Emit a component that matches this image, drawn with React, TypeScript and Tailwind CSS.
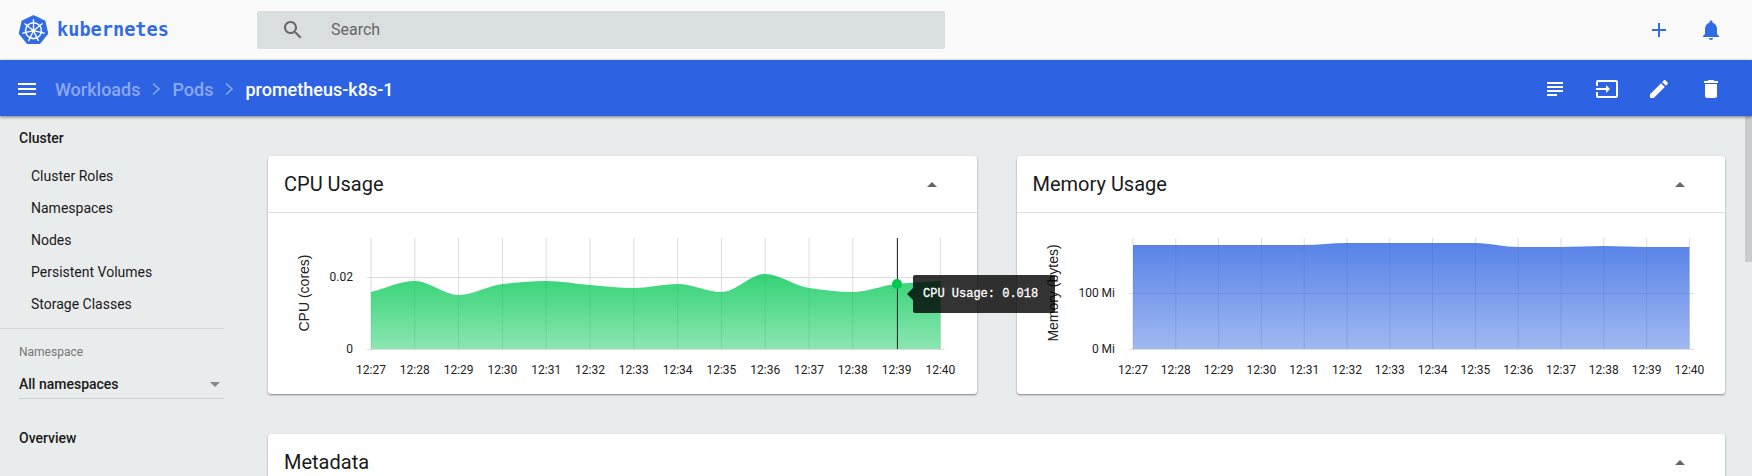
import type { ReactNode } from "react"

const ROBOTO = "font-['Roboto',sans-serif]"
const MINUTES = ["12:27", "12:28", "12:29", "12:30", "12:31", "12:32", "12:33", "12:34", "12:35", "12:36", "12:37", "12:38", "12:39", "12:40"]

// y values are px from the top of the card body
const CPU_POINTS = [79, 68, 82, 71, 68, 72, 75, 71, 79, 61, 75, 79, 71, 68]
const MEM_POINTS = [32, 32, 32, 32, 32, 30, 30, 30, 30, 34, 34, 33, 34, 34]

const CLUSTER_ITEMS = ["Cluster Roles", "Namespaces", "Nodes", "Persistent Volumes", "Storage Classes"]

function smoothPath(xs: number[], ys: number[]) {
  const n = xs.length
  const slopes = xs.slice(1).map((x, i) => (ys[i + 1] - ys[i]) / (x - xs[i]))
  const tangents = xs.map((_, i) => {
    if (i === 0) return slopes[0]
    if (i === n - 1) return slopes[n - 2]
    const a = slopes[i - 1]
    const b = slopes[i]
    return a * b <= 0 ? 0 : (2 * a * b) / (a + b)
  })
  let d = `M${xs[0]} ${ys[0]}`
  for (let i = 0; i < n - 1; i++) {
    const h = (xs[i + 1] - xs[i]) / 3
    d += `C${xs[i] + h} ${ys[i] + tangents[i] * h} ${xs[i + 1] - h} ${ys[i + 1] - tangents[i + 1] * h} ${xs[i + 1]} ${ys[i + 1]}`
  }
  return d
}

function Icon({ d, className }: { d: string; className: string }) {
  return (
    <svg viewBox="0 0 24 24" className={className} fill="currentColor">
      <path d={d} />
    </svg>
  )
}

function Chevron() {
  return (
    <svg viewBox="0 0 10 14" className="w-[10px] h-[14px] mx-[11px] text-[#8aa8f0]" fill="none" stroke="currentColor" strokeWidth="1.6">
      <path d="M2 1.5 8 7 2 12.5" />
    </svg>
  )
}

function KubeLogo() {
  const spokes = [0, 1, 2, 3, 4, 5, 6]
  return (
    <svg viewBox="0 0 32 32" className="w-[31px] h-[31px]">
      <path
        d="M16 1.2 27.4 6.7 30.2 19 22.3 28.9H9.7L1.8 19 4.6 6.7Z"
        fill="#326ce5"
        stroke="#326ce5"
        strokeWidth="2"
        strokeLinejoin="round"
      />
      <circle cx="16" cy="16.2" r="8.2" fill="none" stroke="#fff" strokeWidth="1.6" />
      <circle cx="16" cy="16.2" r="1.8" fill="#fff" />
      {spokes.map((i) => (
        <g key={i} transform={`rotate(${(i * 360) / 7} 16 16.2)`}>
          <line x1="16" y1="16.2" x2="16" y2="4.8" stroke="#fff" strokeWidth="1.4" strokeLinecap="round" />
        </g>
      ))}
    </svg>
  )
}

function Chart({
  id,
  color,
  startX,
  step,
  points,
  ticks,
  tickX,
  axisTitle,
  axisX,
  children,
}: {
  id: string
  color: string
  startX: number
  step: number
  points: number[]
  ticks: { y: number; label: string }[]
  tickX: number
  axisTitle: string
  axisX: number
  children?: ReactNode
}) {
  const xs = points.map((_, i) => startX + i * step)
  const top = 25
  const bottom = 136
  const line = smoothPath(xs, points)
  const area = `${line}L${xs[xs.length - 1]} ${bottom}L${xs[0]} ${bottom}Z`
  return (
    <svg width="100%" height="181" className="block overflow-visible">
      <defs>
        <linearGradient id={id} x1="0" y1="0" x2="0" y2="1">
          <stop offset="0" stopColor={color} stopOpacity="0.8" />
          <stop offset="1" stopColor={color} stopOpacity="0.45" />
        </linearGradient>
      </defs>
      {xs.map((x) => (
        <line key={x} x1={x} x2={x} y1={top} y2={bottom} stroke="#dcdcdc" />
      ))}
      {ticks.map((t) => (
        <line key={t.label} x1={xs[0] - 4} x2={xs[xs.length - 1] + 4} y1={t.y + 0.5} y2={t.y + 0.5} stroke="#dcdcdc" />
      ))}
      <path d={area} fill={`url(#${id})`} />
      {ticks.map((t) => (
        <text key={t.label} x={tickX} y={t.y + 4} textAnchor="end" fontSize="12" fill="#222" fontFamily="Roboto, sans-serif">
          {t.label}
        </text>
      ))}
      {MINUTES.map((label, i) => (
        <text key={i} x={xs[i]} y={161} textAnchor="middle" fontSize="12" fill="#222" fontFamily="Roboto, sans-serif">
          {label}
        </text>
      ))}
      <text
        transform={`translate(${axisX} 80) rotate(-90)`}
        textAnchor="middle"
        fontSize="14"
        fill="#222"
        fontFamily="'Liberation Sans', sans-serif"
      >
        {axisTitle}
      </text>
      {children}
    </svg>
  )
}

function Card({ title, children }: { title: string; children?: ReactNode }) {
  return (
    <div className="bg-white rounded-[3px] shadow-[0_1px_2px_rgba(0,0,0,0.45)]">
      <div className="h-[57px] flex items-center justify-between pl-4 pr-[40px] border-b border-[#dfe2e3]">
        <span className="text-[20px] text-[#1a1a1a]">{title}</span>
        <span className="w-0 h-0 border-x-[5px] border-x-transparent border-b-[5px] border-b-[#666]" />
      </div>
      {children}
    </div>
  )
}

export default function App() {
  return (
    <div className={`h-[476px] w-[1752px] overflow-hidden bg-[#e9eced] flex flex-col ${ROBOTO}`}>
      <header className="h-[60px] shrink-0 bg-[#fafafa] flex items-center">
        <div className="w-[257px] shrink-0 pl-[18px] flex items-center gap-[8px]">
          <KubeLogo />
          <span className="font-['DejaVu_Sans_Mono',monospace] font-bold text-[18.6px] text-[#326ce5]">kubernetes</span>
        </div>
        <div className="w-[688px] h-[38px] bg-[#d9dedf] rounded-[2px] flex items-center pl-[24px] gap-[26px] text-[#666]">
          <Icon
            className="w-6 h-6"
            d="M15.5 14h-.79l-.28-.27C15.41 12.59 16 11.11 16 9.5 16 5.91 13.09 3 9.5 3S3 5.91 3 9.5 5.91 16 9.5 16c1.61 0 3.09-.59 4.23-1.57l.27.28v.79l5 4.99L20.49 19l-4.99-5zm-6 0C7.01 14 5 11.99 5 9.5S7.01 5 9.5 5 14 7.01 14 9.5 11.99 14 9.5 14z"
          />
          <span className="text-[16px]">Search</span>
        </div>
        <div className="ml-auto flex items-center gap-[28px] pr-[29px] text-[#326ce5]">
          <Icon className="w-6 h-6" d="M19 13h-6v6h-2v-6H5v-2h6V5h2v6h6v2z" />
          <Icon
            className="w-6 h-6"
            d="M12 22c1.1 0 2-.9 2-2h-4c0 1.1.89 2 2 2zm6-6v-5c0-3.07-1.64-5.64-4.5-6.32V4c0-.83-.67-1.5-1.5-1.5s-1.5.67-1.5 1.5v.68C7.63 5.36 6 7.92 6 11v5l-2 2v1h16v-1l-2-2z"
          />
        </div>
      </header>

      <div className="h-[56px] shrink-0 pt-[2px] bg-[#2d63e2] shadow-[0_1px_3px_rgba(0,0,0,0.5)] relative flex items-center text-white">
        <Icon className="w-6 h-6 ml-[15px]" d="M3 18h18v-2H3v2zm0-5h18v-2H3v2zm0-7v2h18V6H3z" />
        <div className="ml-[16px] flex items-center text-[18px] font-medium">
          <span className="text-[#8aa8f0]">Workloads</span>
          <Chevron />
          <span className="text-[#8aa8f0]">Pods</span>
          <Chevron />
          <span>prometheus-k8s-1</span>
        </div>
        <div className="ml-auto flex items-center gap-[28px] pr-[29px]">
          <Icon className="w-6 h-6" d="M14 17H4v2h10v-2zm6-8H4v2h16V9zM4 15h16v-2H4v2zM4 5v2h16V5H4z" />
          <Icon
            className="w-6 h-6"
            d="M21 3.01H3c-1.1 0-2 .9-2 2V9h2V4.99h18v14.03H3V15H1v4.01c0 1.1.9 1.98 2 1.98h18c1.1 0 2-.88 2-1.98v-14c0-1.11-.9-2-2-2zM11 16l4-4-4-4v3H1v2h10v3z"
          />
          <Icon
            className="w-6 h-6"
            d="M3 17.25V21h3.75L17.81 9.94l-3.75-3.75L3 17.25zM20.71 7.04c.39-.39.39-1.02 0-1.41l-2.34-2.34c-.39-.39-1.02-.39-1.41 0l-1.83 1.83 3.75 3.75 1.83-1.83z"
          />
          <Icon className="w-6 h-6" d="M6 19c0 1.1.9 2 2 2h8c1.1 0 2-.9 2-2V7H6v12zM19 4h-3.5l-1-1h-5l-1 1H5v2h14V4z" />
        </div>
      </div>

      <div className="flex-1 flex min-h-0">
        <aside className="w-[224px] shrink-0 text-[14px] text-[#1a1a1a]">
          <div className="pl-[19px] pt-[12px] h-[44px] font-medium">Cluster</div>
          <ul className="pl-[31px]">
            {CLUSTER_ITEMS.map((item) => (
              <li key={item} className="h-[32px] flex items-center">
                {item}
              </li>
            ))}
          </ul>
          <div className="mt-[8px] border-t border-[#d2d6d8]" />
          <div className="pl-[19px] pt-[14px] text-[12px] text-[#777]">Namespace</div>
          <div className="ml-[19px] mt-[13px] pb-[4px] h-[25px] flex items-center justify-between border-b border-[#c9cdcf]">
            <span className="font-medium">All namespaces</span>
            <span className="mr-[4px] w-0 h-0 border-x-[5px] border-x-transparent border-t-[5px] border-t-[#888]" />
          </div>
          <div className="pl-[19px] pt-[29px] font-medium">Overview</div>
        </aside>

        <main className="flex-1 min-w-0 pl-[44px] pr-[20px] pt-[40px]">
          <div className="grid grid-cols-2 gap-x-[40px]">
            <Card title="CPU Usage">
              <Chart
                id="cpu-fill"
                color="#00c853"
                startX={103}
                step={43.8}
                points={CPU_POINTS}
                ticks={[
                  { y: 64, label: "0.02" },
                  { y: 136, label: "0" },
                ]}
                tickX={85}
                axisTitle="CPU (cores)"
                axisX={41}
              >
                <line x1={629.5} x2={629.5} y1={25} y2={136} stroke="#333" />
                <circle cx={629} cy={71} r={5} fill="#00c853" />
              </Chart>
            </Card>
            <Card title="Memory Usage">
              <Chart
                id="mem-fill"
                color="#2d63e2"
                startX={116}
                step={42.8}
                points={MEM_POINTS}
                ticks={[
                  { y: 80, label: "100 Mi" },
                  { y: 136, label: "0 Mi" },
                ]}
                tickX={98}
                axisTitle="Memory (bytes)"
                axisX={41}
              />
            </Card>
          </div>
          <div className="mt-[40px]">
            <Card title="Metadata" />
          </div>
        </main>

        <div className="w-[7px] shrink-0 bg-[#c9cbcc] h-[146px]" />
      </div>

      {/* chart tooltip floats above both cards */}
      <div className="absolute left-[913px] top-[275px] h-[38px] w-[142px] rounded-[2px] bg-[rgba(0,0,0,0.8)] flex items-center pl-[10px] text-white font-['Liberation_Mono',monospace] text-[12px] [-webkit-text-stroke:0.3px_white]">
        <span className="absolute -left-[6px] top-[13px] w-0 h-0 border-y-[6px] border-y-transparent border-r-[6px] border-r-[rgba(0,0,0,0.8)]" />
        CPU Usage: 0.018
      </div>
    </div>
  )
}
